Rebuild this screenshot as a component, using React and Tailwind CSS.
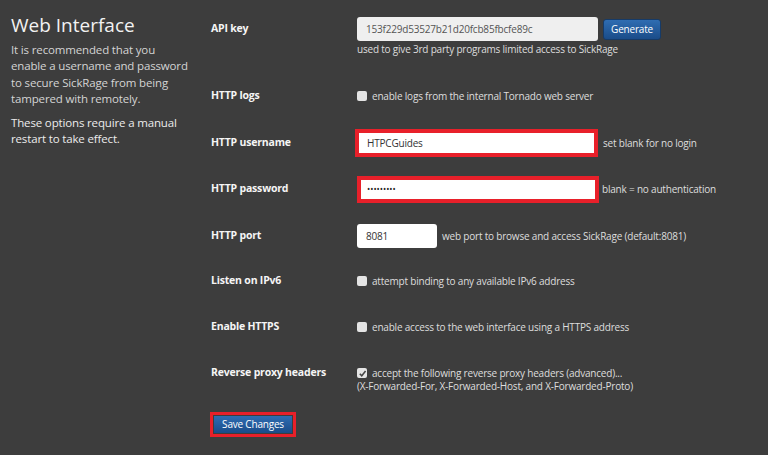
import { useState } from 'react'

const font = { fontFamily: '"Open Sans", "Liberation Sans", sans-serif' }

function Label({ children }) {
  return (
    <div className="w-[146px] shrink-0 text-[10.5px] font-bold tracking-[-0.2px] text-[#f5f5f5]">
      {children}
    </div>
  )
}

function Check({ checked, children }) {
  return (
    <label className="flex items-center gap-[5px] text-[10px] tracking-[-0.2px] text-[#dddddd]">
      <span className="w-[10px] h-[10px] bg-[#e4e4e4] rounded-[2px] flex items-center justify-center">
        {checked && (
          <svg viewBox="0 0 10 10" className="w-[9px] h-[9px]">
            <path d="M2 5.2 L4.2 7.6 L8.4 2.2" fill="none" stroke="#444" strokeWidth="1.7" />
          </svg>
        )}
      </span>
      {children}
    </label>
  )
}

export default function App() {
  const [apiKey] = useState('153f229d53527b21d20fcb85fbcfe89c')

  return (
    <div className="w-[768px] h-[455px] bg-[#3d3d3d] flex overflow-hidden" style={font}>
      <div className="w-[211px] shrink-0 pl-[11px] pt-[13px]">
        <h1 className="text-[19px] leading-[24px] text-[#f2f2f2] mb-[5px]">Web Interface</h1>
        <div className="w-[182px]">
          <p className="text-[11.5px] leading-[16.3px] tracking-[-0.15px] text-[#d4d4d4] mb-[8px]">
            It is recommended that you enable a username and password to secure SickRage from being tampered with remotely.
          </p>
          <p className="text-[11.5px] leading-[16.3px] tracking-[-0.15px] text-[#ececec]">
            These options require a manual restart to take effect.
          </p>
        </div>
      </div>

      <div className="pt-[17px] flex flex-col">
        <div className="flex">
          <Label><div className="h-[24px] flex items-center">API key</div></Label>
          <div>
            <div className="flex items-center gap-[5px]">
              <input
                readOnly
                value={apiKey}
                className="w-[241px] h-[24px] bg-[#efefef] rounded-[3px] px-[9px] text-[10px] tracking-[-0.2px] text-[#555] outline-none"
              />
              <button className="h-[21px] w-[58px] rounded-[3px] bg-gradient-to-b from-[#2f6db2] to-[#1a4c89] border border-[#163b68] text-[10px] tracking-[-0.2px] text-white">
                Generate
              </button>
            </div>
            <div className="text-[10px] tracking-[-0.2px] leading-[14px] text-[#dddddd] mt-[1px]">
              used to give 3rd party programs limited access to SickRage
            </div>
          </div>
        </div>

        <div className="flex items-center h-[28px] mt-[26px]">
          <Label>HTTP logs</Label>
          <Check>enable logs from the internal Tornado web server</Check>
        </div>

        <div className="flex items-center h-[28px] mt-[19px]">
          <Label>HTTP username</Label>
          <div className="flex items-center gap-[5px] -ml-[2px]">
            <div className="border-[4px] border-[#e8202a] bg-white w-[243px] h-[28px] flex items-center px-[8px] text-[10px] tracking-[-0.2px] text-[#333]">
              HTPCGuides
            </div>
            <span className="text-[10px] tracking-[-0.2px] text-[#dddddd]">set blank for no login</span>
          </div>
        </div>

        <div className="flex items-center h-[28px] mt-[18px]">
          <Label>HTTP password</Label>
          <div className="flex items-center gap-[3px]">
            <div className="border-[4px] border-[#e8202a] bg-white w-[242px] h-[27px] flex items-center px-[6px] text-[8.5px] text-[#222]">
              •••••••••
            </div>
            <span className="text-[10px] tracking-[-0.2px] text-[#dddddd]">blank = no authentication</span>
          </div>
        </div>

        <div className="flex items-center h-[28px] mt-[19px]">
          <Label>HTTP port</Label>
          <div className="flex items-center gap-[5px]">
            <div className="bg-white rounded-[3px] w-[80px] h-[24px] flex items-center px-[9px] text-[10px] tracking-[-0.2px] text-[#333]">
              8081
            </div>
            <span className="text-[10px] tracking-[-0.2px] text-[#dddddd]">
              web port to browse and access SickRage (default:8081)
            </span>
          </div>
        </div>

        <div className="flex items-center h-[28px] mt-[17px]">
          <Label>Listen on IPv6</Label>
          <Check>attempt binding to any available IPv6 address</Check>
        </div>

        <div className="flex items-center h-[28px] mt-[18px]">
          <Label>Enable HTTPS</Label>
          <Check>enable access to the web interface using a HTTPS address</Check>
        </div>

        <div className="flex mt-[18px]">
          <Label><div className="h-[28px] flex items-center">Reverse proxy headers</div></Label>
          <div>
            <div className="h-[28px] flex items-center">
              <Check checked>accept the following reverse proxy headers (advanced)...</Check>
            </div>
            <div className="text-[10px] tracking-[-0.2px] leading-[12px] -mt-[7px] text-[#dddddd]">
              (X-Forwarded-For, X-Forwarded-Host, and X-Forwarded-Proto)
            </div>
          </div>
        </div>

        <div className="-ml-[1px] mt-[18px]">
          <div className="inline-block border-[3px] border-[#e8202a] p-[1px] bg-[#3d3d3d]">
            <button className="h-[17px] w-[78px] bg-gradient-to-b from-[#2f6db2] to-[#1a4c89] text-[10px] tracking-[-0.2px] text-white leading-[17px] block">
              Save Changes
            </button>
          </div>
        </div>
      </div>
    </div>
  )
}
